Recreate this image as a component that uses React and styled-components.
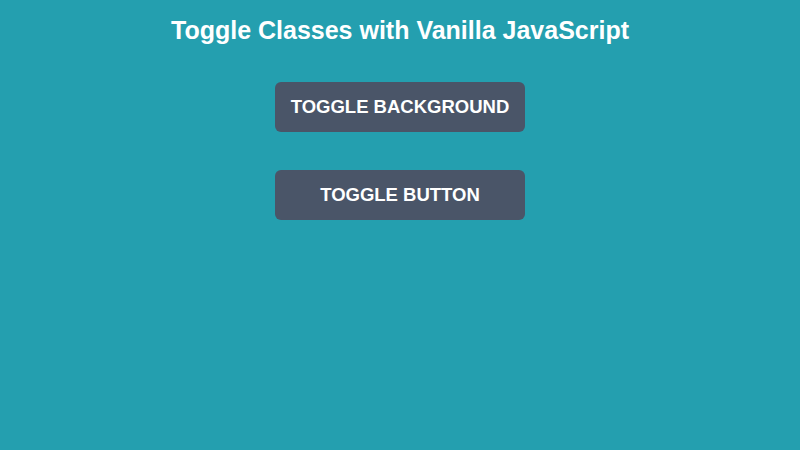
import React, { useState } from 'react'
import styled, { createGlobalStyle } from 'styled-components'

const GlobalStyle = createGlobalStyle`
  html, body {
    margin: 0;
    padding: 0;
    height: 100%;
  }
  body {
    background-color: ${(p) => (p.$alt ? '#2d3748' : '#249faf')};
    font-family: "Liberation Sans", Arial, sans-serif;
  }
`

const Page = styled.div`
  display: flex;
  flex-direction: column;
  align-items: center;
  padding-top: 15px;
`

const Title = styled.h1`
  margin: 0 0 37px;
  color: #fff;
  font-size: 25px;
  font-weight: 700;
  line-height: 30px;
`

const Buttons = styled.div`
  display: flex;
  flex-direction: column;
  gap: 38px;
`

const Button = styled.button`
  width: 250px;
  height: 50px;
  border: none;
  border-radius: 6px;
  background: ${(p) => (p.$active ? '#2b6cb0' : '#4a5568')};
  color: #fff;
  font-family: inherit;
  font-size: 18.5px;
  font-weight: 700;
  text-transform: uppercase;
  cursor: pointer;
`

const App = () => {
  const [altBg, setAltBg] = useState(false)
  const [active, setActive] = useState(false)

  return (
    <>
      <GlobalStyle $alt={altBg} />
      <Page>
        <Title>Toggle Classes with Vanilla JavaScript</Title>
        <Buttons>
          <Button onClick={() => setAltBg(!altBg)}>Toggle Background</Button>
          <Button $active={active} onClick={() => setActive(!active)}>
            Toggle Button
          </Button>
        </Buttons>
      </Page>
    </>
  )
}

export default App
